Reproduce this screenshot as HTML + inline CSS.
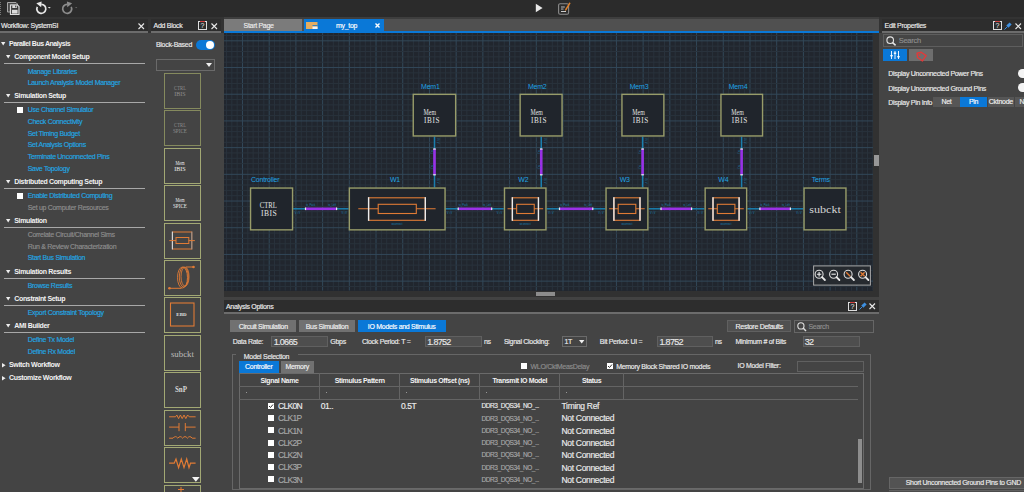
<!DOCTYPE html>
<html><head><meta charset="utf-8"><style>
*{margin:0;padding:0;box-sizing:border-box}
html,body{width:1024px;height:492px;overflow:hidden;background:#333;font-family:"Liberation Sans",sans-serif;font-size:7px;color:#e6e6e6}
.a{position:absolute}
.t{position:absolute;white-space:nowrap;line-height:10px;height:10px;letter-spacing:-0.3px;-webkit-text-stroke:0.15px currentColor}
.lk{color:#22a8e4}
.dis{color:#8e8e8e}
.b{font-weight:bold;color:#f2f2f2;letter-spacing:-0.35px;-webkit-text-stroke:0}
.w{color:#ececec}
svg{position:absolute;overflow:visible}
.serif{font-family:"Liberation Serif",serif}
</style></head><body>
<div class="a" style="left:0px;top:0px;width:1024px;height:17px;background:#2b2b2b;"></div>
<div class="a" style="left:0px;top:17px;width:1024px;height:2px;background:#333;"></div>
<div class="a" style="left:0px;top:19px;width:148px;height:12px;background:#2d2d2d;"></div>
<div class="a" style="left:0px;top:31px;width:148px;height:2px;background:#6c6c6c;"></div>
<div class="a" style="left:0px;top:33px;width:151px;height:459px;background:#444;"></div>
<div class="a" style="left:151px;top:19px;width:70px;height:12px;background:#2d2d2d;"></div>
<div class="a" style="left:151px;top:31px;width:70px;height:2px;background:#6c6c6c;"></div>
<div class="a" style="left:151px;top:33px;width:73px;height:459px;background:#444;"></div>
<div class="a" style="left:224px;top:17px;width:655px;height:14px;background:#505050;"></div>
<div class="a" style="left:224px;top:17px;width:655px;height:2px;background:#3e3e3e;"></div>
<div class="a" style="left:224px;top:31px;width:655px;height:2px;background:#0a78d7;"></div>
<div class="a" style="left:224px;top:19px;width:78px;height:12px;background:#7b7b7b;"></div>
<div class="a" style="left:304px;top:19px;width:80px;height:12px;background:#0a78d7;"></div>
<div class="a" style="left:224px;top:33px;width:655px;height:264px;background:#313131;"></div>
<div class="a" style="left:224px;top:297px;width:655px;height:3px;background:#424242;"></div>
<div class="a" style="left:224px;top:300px;width:655px;height:12px;background:#2d2d2d;"></div>
<div class="a" style="left:224px;top:312px;width:655px;height:2px;background:#6c6c6c;"></div>
<div class="a" style="left:224px;top:314px;width:655px;height:178px;background:#444;"></div>
<div class="a" style="left:882px;top:19px;width:142px;height:12px;background:#2d2d2d;"></div>
<div class="a" style="left:882px;top:31px;width:142px;height:2px;background:#6c6c6c;"></div>
<div class="a" style="left:879px;top:33px;width:145px;height:459px;background:#444;"></div>
<svg style="left:0;top:0" width="600" height="17">
<g fill="#777"><rect x="0" y="2" width="1" height="1"/><rect x="0" y="4" width="1" height="1"/><rect x="0" y="6" width="1" height="1"/><rect x="0" y="8" width="1" height="1"/><rect x="0" y="10" width="1" height="1"/><rect x="0" y="12" width="1" height="1"/><rect x="0" y="14" width="1" height="1"/></g>
<path d="M7.5 2.5 h8.5 l1.5 1.5 v1 h-7 v7 h-3z" fill="#4a4a4a" stroke="#a8a8a8" stroke-width="1"/>
<path d="M10.5 5 h7 l1.5 1.5 v8 h-8.5 z" fill="#3a3a3a" stroke="#dcdcdc" stroke-width="1.2"/>
<rect x="12.3" y="5.2" width="4.6" height="2.8" fill="#dcdcdc"/><rect x="15.2" y="5.6" width="1" height="1.8" fill="#3a3a3a"/>
<rect x="12" y="9.8" width="5.6" height="3.8" fill="#dcdcdc"/>
<path d="M37.3 6.8 A4.5 4.5 0 1 0 41.3 4.3" fill="none" stroke="#e8e8e8" stroke-width="1.7"/>
<path d="M36.3 3.2 L41.6 1.4 L41.2 7.2 z" fill="#e8e8e8"/>
<path d="M47.8 7 h3 l-1.5 1.6z" fill="#ddd"/>
<path d="M71.2 6.8 A4.5 4.5 0 1 1 67.2 4.3" fill="none" stroke="#8c8c8c" stroke-width="1.7"/>
<path d="M72.2 3.2 L66.9 1.4 L67.3 7.2 z" fill="#8c8c8c"/>
<path d="M75 7 h2.4 l-1.2 1.3z" fill="#666"/>
<path d="M535.8 3.8 L542.6 8 L535.8 12.2 z" fill="#e8e8e8"/>
<rect x="558.6" y="3.8" width="10" height="10.4" rx="1.5" fill="none" stroke="#8a8a8a" stroke-width="1.1"/>
<rect x="561" y="6.5" width="3.8" height="1" fill="#bbb"/><rect x="561" y="8.4" width="2.5" height="1.3" fill="#999"/><rect x="561" y="11" width="5" height="1" fill="#ccc"/>
<path d="M569.5 2.3 L570.6 3.3 L566.4 10.2 L565 10.8 L565.2 9.3 z" fill="#e4822a"/>
</svg>
<div class="t w" style="left:1px;top:20.50px;">Workflow: SystemSI</div>
<svg style="left:138.3px;top:22.6px" width="6.5" height="6.5"><path d="M0.5 0.5 L6.0 6.0 M6.0 0.5 L0.5 6.0" stroke="#e8e8e8" stroke-width="1.1"/></svg>
<svg style="left:0.6px;top:41.6px" width="5" height="4"><path d="M0 0 H4.4 L2.2 3.6z" fill="#eee"/></svg>
<div class="t b" style="left:9px;top:38.60px;letter-spacing:-0.45px">Parallel Bus Analysis</div>
<svg style="left:6px;top:55.1px" width="5" height="4"><path d="M0 0 H4.4 L2.2 3.6z" fill="#eee"/></svg>
<div class="t b" style="left:14.3px;top:52.10px;">Component Model Setup</div>
<div class="a" style="left:4px;top:63px;width:141.4px;height:1.2px;background:#a8a8a8;"></div>
<div class="t lk" style="left:27.7px;top:66.60px;">Manage Libraries</div>
<div class="t lk" style="left:27.7px;top:77.60px;">Launch Analysis Model Manager</div>
<svg style="left:6px;top:94.1px" width="5" height="4"><path d="M0 0 H4.4 L2.2 3.6z" fill="#eee"/></svg>
<div class="t b" style="left:14.3px;top:91.10px;">Simulation Setup</div>
<div class="a" style="left:4px;top:102px;width:141.4px;height:1.2px;background:#a8a8a8;"></div>
<div class="a" style="left:17px;top:106.6px;width:6px;height:6px;background:#fff"></div>
<div class="t lk" style="left:27.7px;top:104.60px;">Use Channel Simulator</div>
<div class="t lk" style="left:27.7px;top:116.80px;">Check Connectivity</div>
<div class="t lk" style="left:27.7px;top:128.60px;">Set Timing Budget</div>
<div class="t lk" style="left:27.7px;top:140.20px;">Set Analysis Options</div>
<div class="t lk" style="left:27.7px;top:152.00px;">Terminate Unconnected Pins</div>
<div class="t lk" style="left:27.7px;top:163.80px;">Save Topology</div>
<svg style="left:6px;top:180.29999999999998px" width="5" height="4"><path d="M0 0 H4.4 L2.2 3.6z" fill="#eee"/></svg>
<div class="t b" style="left:14.3px;top:177.30px;">Distributed Computing Setup</div>
<div class="a" style="left:4px;top:188.3px;width:141.4px;height:1.2px;background:#a8a8a8;"></div>
<div class="a" style="left:17px;top:193.0px;width:6px;height:6px;background:#fff"></div>
<div class="t lk" style="left:27.7px;top:191.00px;">Enable Distributed Computing</div>
<div class="t dis" style="left:27.7px;top:202.90px;">Set up Computer Resources</div>
<svg style="left:6px;top:219.0px" width="5" height="4"><path d="M0 0 H4.4 L2.2 3.6z" fill="#eee"/></svg>
<div class="t b" style="left:14.3px;top:216.00px;">Simulation</div>
<div class="a" style="left:4px;top:227px;width:141.4px;height:1.2px;background:#a8a8a8;"></div>
<div class="t dis" style="left:27.7px;top:229.80px;">Correlate Circuit/Channel Sims</div>
<div class="t dis" style="left:27.7px;top:241.80px;">Run &amp; Review Characterization</div>
<div class="t lk" style="left:27.7px;top:253.40px;">Start Bus Simulation</div>
<svg style="left:6px;top:269.6px" width="5" height="4"><path d="M0 0 H4.4 L2.2 3.6z" fill="#eee"/></svg>
<div class="t b" style="left:14.3px;top:266.60px;">Simulation Results</div>
<div class="a" style="left:4px;top:277.8px;width:141.4px;height:1.2px;background:#a8a8a8;"></div>
<div class="t lk" style="left:27.7px;top:280.80px;">Browse Results</div>
<svg style="left:6px;top:296.8px" width="5" height="4"><path d="M0 0 H4.4 L2.2 3.6z" fill="#eee"/></svg>
<div class="t b" style="left:14.3px;top:293.80px;">Constraint Setup</div>
<div class="a" style="left:4px;top:304.6px;width:141.4px;height:1.2px;background:#a8a8a8;"></div>
<div class="t lk" style="left:27.7px;top:308.20px;">Export Constraint Topology</div>
<svg style="left:6px;top:324.3px" width="5" height="4"><path d="M0 0 H4.4 L2.2 3.6z" fill="#eee"/></svg>
<div class="t b" style="left:14.3px;top:321.30px;">AMI Builder</div>
<div class="a" style="left:4px;top:332px;width:141.4px;height:1.2px;background:#a8a8a8;"></div>
<div class="t lk" style="left:27.7px;top:335.00px;">Define Tx Model</div>
<div class="t lk" style="left:27.7px;top:346.90px;">Define Rx Model</div>
<svg style="left:1.5px;top:363.0px" width="4" height="5"><path d="M0 0 V4.6 L3.6 2.3z" fill="#eee"/></svg>
<div class="t b" style="left:9px;top:360.30px;">Switch Workflow</div>
<svg style="left:1.5px;top:376.1px" width="4" height="5"><path d="M0 0 V4.6 L3.6 2.3z" fill="#eee"/></svg>
<div class="t b" style="left:9px;top:373.40px;">Customize Workflow</div>
<div class="t w" style="left:153.6px;top:20.50px;">Add Block</div>
<svg style="left:198px;top:21.3px" width="9" height="9"><rect x="0.5" y="0.5" width="8" height="8" fill="none" stroke="#ddd" stroke-width="1"/><rect x="2" y="0" width="5" height="1" fill="#d04040"/><text x="4.5" y="7.2" font-size="7" text-anchor="middle" fill="#eee" font-family="Liberation Sans">?</text></svg>
<svg style="left:211px;top:22.6px" width="6.5" height="6.5"><path d="M0.5 0.5 L6.0 6.0 M6.0 0.5 L0.5 6.0" stroke="#e8e8e8" stroke-width="1.1"/></svg>
<div class="t w" style="left:156px;top:40.00px;">Block-Based</div>
<div class="a" style="left:195.5px;top:40px;width:19.5px;height:10px;background:#0a78d7;border-radius:5px"></div>
<div class="a" style="left:205.9px;top:41.1px;width:7.9px;height:7.9px;background:#fff;border-radius:4px"></div>
<div class="a" style="left:156px;top:59px;width:59px;height:12px;background:transparent;border:1px solid #6a6a6a"></div>
<svg style="left:206px;top:63px" width="7" height="5"><path d="M0 0 H6 L3 4z" fill="#f0f0f0"/></svg>
<div class="a" style="left:164px;top:72.8px;width:37px;height:36px;border:1.5px solid #858a5e"></div>
<svg style="left:164px;top:72.8px" width="37" height="36"><text x="16" y="16.60" font-size="6" text-anchor="middle" fill="#8d8d8d" font-family="Liberation Serif" textLength="12" lengthAdjust="spacingAndGlyphs">CTRL</text><text x="16" y="22.60" font-size="6" text-anchor="middle" fill="#8d8d8d" font-family="Liberation Serif" textLength="11.5" lengthAdjust="spacingAndGlyphs">IBIS</text></svg>
<div class="a" style="left:164px;top:110.22999999999999px;width:37px;height:36px;border:1.5px solid #858a5e"></div>
<svg style="left:164px;top:110.22999999999999px" width="37" height="36"><text x="16" y="16.60" font-size="6" text-anchor="middle" fill="#8d8d8d" font-family="Liberation Serif" textLength="12" lengthAdjust="spacingAndGlyphs">CTRL</text><text x="16" y="22.60" font-size="6" text-anchor="middle" fill="#8d8d8d" font-family="Liberation Serif" textLength="14" lengthAdjust="spacingAndGlyphs">SPICE</text></svg>
<div class="a" style="left:164px;top:147.66px;width:37px;height:36px;border:1.5px solid #a2a874"></div>
<svg style="left:164px;top:147.66px" width="37" height="36"><text x="16" y="16.60" font-size="6" text-anchor="middle" fill="#ececec" font-family="Liberation Serif" textLength="9" lengthAdjust="spacingAndGlyphs">Mem</text><text x="16" y="22.60" font-size="6" text-anchor="middle" fill="#ececec" font-family="Liberation Serif" textLength="11.5" lengthAdjust="spacingAndGlyphs">IBIS</text></svg>
<div class="a" style="left:164px;top:185.08999999999997px;width:37px;height:36px;border:1.5px solid #a2a874"></div>
<svg style="left:164px;top:185.08999999999997px" width="37" height="36"><text x="16" y="16.60" font-size="6" text-anchor="middle" fill="#ececec" font-family="Liberation Serif" textLength="9" lengthAdjust="spacingAndGlyphs">Mem</text><text x="16" y="22.60" font-size="6" text-anchor="middle" fill="#ececec" font-family="Liberation Serif" textLength="14" lengthAdjust="spacingAndGlyphs">SPICE</text></svg>
<div class="a" style="left:164px;top:222.51999999999998px;width:37px;height:36px;border:1.5px solid #a2a874"></div>
<svg style="left:164px;top:222.51999999999998px" width="37" height="36"><rect x="8.5" y="9" width="19.3" height="17" fill="none" stroke="#e07b35" stroke-width="1"/><rect x="7.8" y="8.6" width="1.2" height="17.8" fill="#d4d4d4"/><rect x="27.3" y="8.6" width="1" height="17.8" fill="#999"/><rect x="12" y="14.5" width="12.8" height="6" fill="none" stroke="#e07b35" stroke-width="1"/><path d="M5.3 17.6 H12 M24.8 17.6 H30.9" stroke="#e07b35" stroke-width="1"/></svg>
<div class="a" style="left:164px;top:259.95px;width:37px;height:36px;border:1.5px solid #a2a874"></div>
<svg style="left:164px;top:259.95px" width="37" height="36"><g fill="none" stroke="#e07b35" stroke-width="0.9"><ellipse cx="18.5" cy="17.5" rx="5" ry="10.5"/><ellipse cx="19.8" cy="17" rx="4.5" ry="10"/><ellipse cx="21" cy="16.6" rx="4" ry="9.5"/></g><path d="M4.5 28.3 H17.5 M22 7 H30" stroke="#e07b35" stroke-width="1"/><circle cx="5.5" cy="28.3" r="1.3" fill="#e07b35"/><circle cx="29.5" cy="7" r="1.3" fill="#e07b35"/></svg>
<div class="a" style="left:164px;top:297.38px;width:37px;height:36px;border:1.5px solid #a2a874"></div>
<svg style="left:164px;top:297.38px" width="37" height="36"><rect x="6.5" y="6" width="23.5" height="23" fill="none" stroke="#e07b35" stroke-width="1.1"/><text x="17.5" y="19.3" font-size="5" text-anchor="middle" fill="#e0e0e0" font-family="Liberation Serif" font-weight="bold">EBD</text></svg>
<div class="a" style="left:164px;top:334.81px;width:37px;height:36px;border:1.5px solid #a2a874"></div>
<svg style="left:164px;top:334.81px" width="37" height="36"><text x="18.4" y="22.3" font-size="8" fill="#bdbdbd" font-family="Liberation Serif" text-anchor="middle" textLength="23" lengthAdjust="spacingAndGlyphs">subckt</text></svg>
<div class="a" style="left:164px;top:372.24px;width:37px;height:36px;border:1.5px solid #a2a874"></div>
<svg style="left:164px;top:372.24px" width="37" height="36"><text x="17" y="20" font-size="8.2" text-anchor="middle" fill="#d8d8d8" font-family="Liberation Serif" font-weight="bold" textLength="12" lengthAdjust="spacingAndGlyphs">SnP</text></svg>
<div class="a" style="left:164px;top:409.67px;width:37px;height:36px;border:1.5px solid #a2a874"></div>
<svg style="left:164px;top:409.67px" width="37" height="36"><g stroke="#e07b35" stroke-width="1" fill="none"><path d="M5.1 6.8 H11.5 L12.8 5 L14.6 8.6 L16.4 5 L18.2 8.6 L20 5 L21.8 8.6 L23.6 5 L25.2 6.8 H31.6"/><path d="M5.1 17.1 H15 M15 13 V21.2 M21.3 13 V21.2 M21.3 17.1 H31.6"/><path d="M5.1 28.2 H9 q2.4 -3.2 4.8 0 q2.4 -3.2 4.8 0 q2.4 -3.2 4.8 0 q2.4 -3.2 4.8 0 H31.6"/></g></svg>
<div class="a" style="left:164px;top:447.1px;width:37px;height:36px;border:1.5px solid #a2a874"></div>
<svg style="left:164px;top:447.1px" width="37" height="36"><path d="M5.1 16.2 H10.2 L12 12 L14.6 20.6 L17.3 12 L20 20.6 L22.7 12 L25 20.6 L26.5 16.2 H31.6" fill="none" stroke="#e07b35" stroke-width="1.2"/></svg>
<div class="a" style="left:164px;top:484.53000000000003px;width:37px;height:36px;border:1.5px solid #a2a874"></div>
<svg style="left:164px;top:484.53000000000003px" width="37" height="36"><path d="M17 2 V8 M14 4.5 H20" stroke="#e07b35" stroke-width="1"/></svg>
<svg style="left:192.2px;top:477px" width="8" height="6"><path d="M0 0 H7.7 L3.85 4.8z" fill="#f4f4f4"/></svg>
<div class="t w" style="left:158.60px;top:20.50px;width:200px;text-align:center;">Start Page</div>
<svg style="left:305.5px;top:21.5px" width="12" height="8"><rect x="0" y="0" width="11.5" height="7" fill="#e3ad62"/><rect x="6.5" y="3.2" width="5" height="0.9" fill="#0a78d7"/><rect x="6.5" y="4.6" width="5" height="2.4" fill="#f4f4f4"/></svg>
<div class="t w" style="left:246.50px;top:20.50px;width:200px;text-align:center;color:#fff">my_top</div>
<svg style="left:374.5px;top:22.8px" width="5" height="5"><path d="M0.5 0.5 L4.5 4.5 M4.5 0.5 L0.5 4.5" stroke="#fff" stroke-width="1.4"/></svg>
<div class="a" style="left:224px;top:33px;width:649px;height:257.5px;background:#21262e;overflow:hidden"><svg style="left:0;top:0" width="649" height="257.5"><rect x="1.95" y="0" width="1" height="257.5" fill="#29323c"/><rect x="7.30" y="0" width="1" height="257.5" fill="#29323c"/><rect x="12.64" y="0" width="1" height="257.5" fill="#29323c"/><rect x="17.98" y="0" width="1" height="257.5" fill="#324859"/><rect x="23.32" y="0" width="1" height="257.5" fill="#29323c"/><rect x="28.66" y="0" width="1" height="257.5" fill="#29323c"/><rect x="34.01" y="0" width="1" height="257.5" fill="#29323c"/><rect x="39.35" y="0" width="1" height="257.5" fill="#29323c"/><rect x="44.69" y="0" width="1" height="257.5" fill="#324859"/><rect x="50.03" y="0" width="1" height="257.5" fill="#29323c"/><rect x="55.37" y="0" width="1" height="257.5" fill="#29323c"/><rect x="60.72" y="0" width="1" height="257.5" fill="#29323c"/><rect x="66.06" y="0" width="1" height="257.5" fill="#29323c"/><rect x="71.40" y="0" width="1" height="257.5" fill="#324859"/><rect x="76.74" y="0" width="1" height="257.5" fill="#29323c"/><rect x="82.08" y="0" width="1" height="257.5" fill="#29323c"/><rect x="87.43" y="0" width="1" height="257.5" fill="#29323c"/><rect x="92.77" y="0" width="1" height="257.5" fill="#29323c"/><rect x="98.11" y="0" width="1" height="257.5" fill="#324859"/><rect x="103.45" y="0" width="1" height="257.5" fill="#29323c"/><rect x="108.79" y="0" width="1" height="257.5" fill="#29323c"/><rect x="114.14" y="0" width="1" height="257.5" fill="#29323c"/><rect x="119.48" y="0" width="1" height="257.5" fill="#29323c"/><rect x="124.82" y="0" width="1" height="257.5" fill="#324859"/><rect x="130.16" y="0" width="1" height="257.5" fill="#29323c"/><rect x="135.50" y="0" width="1" height="257.5" fill="#29323c"/><rect x="140.85" y="0" width="1" height="257.5" fill="#29323c"/><rect x="146.19" y="0" width="1" height="257.5" fill="#29323c"/><rect x="151.53" y="0" width="1" height="257.5" fill="#324859"/><rect x="156.87" y="0" width="1" height="257.5" fill="#29323c"/><rect x="162.21" y="0" width="1" height="257.5" fill="#29323c"/><rect x="167.56" y="0" width="1" height="257.5" fill="#29323c"/><rect x="172.90" y="0" width="1" height="257.5" fill="#29323c"/><rect x="178.24" y="0" width="1" height="257.5" fill="#324859"/><rect x="183.58" y="0" width="1" height="257.5" fill="#29323c"/><rect x="188.92" y="0" width="1" height="257.5" fill="#29323c"/><rect x="194.27" y="0" width="1" height="257.5" fill="#29323c"/><rect x="199.61" y="0" width="1" height="257.5" fill="#29323c"/><rect x="204.95" y="0" width="1" height="257.5" fill="#324859"/><rect x="210.29" y="0" width="1" height="257.5" fill="#29323c"/><rect x="215.63" y="0" width="1" height="257.5" fill="#29323c"/><rect x="220.98" y="0" width="1" height="257.5" fill="#29323c"/><rect x="226.32" y="0" width="1" height="257.5" fill="#29323c"/><rect x="231.66" y="0" width="1" height="257.5" fill="#324859"/><rect x="237.00" y="0" width="1" height="257.5" fill="#29323c"/><rect x="242.34" y="0" width="1" height="257.5" fill="#29323c"/><rect x="247.69" y="0" width="1" height="257.5" fill="#29323c"/><rect x="253.03" y="0" width="1" height="257.5" fill="#29323c"/><rect x="258.37" y="0" width="1" height="257.5" fill="#324859"/><rect x="263.71" y="0" width="1" height="257.5" fill="#29323c"/><rect x="269.05" y="0" width="1" height="257.5" fill="#29323c"/><rect x="274.40" y="0" width="1" height="257.5" fill="#29323c"/><rect x="279.74" y="0" width="1" height="257.5" fill="#29323c"/><rect x="285.08" y="0" width="1" height="257.5" fill="#324859"/><rect x="290.42" y="0" width="1" height="257.5" fill="#29323c"/><rect x="295.76" y="0" width="1" height="257.5" fill="#29323c"/><rect x="301.11" y="0" width="1" height="257.5" fill="#29323c"/><rect x="306.45" y="0" width="1" height="257.5" fill="#29323c"/><rect x="311.79" y="0" width="1" height="257.5" fill="#324859"/><rect x="317.13" y="0" width="1" height="257.5" fill="#29323c"/><rect x="322.47" y="0" width="1" height="257.5" fill="#29323c"/><rect x="327.82" y="0" width="1" height="257.5" fill="#29323c"/><rect x="333.16" y="0" width="1" height="257.5" fill="#29323c"/><rect x="338.50" y="0" width="1" height="257.5" fill="#324859"/><rect x="343.84" y="0" width="1" height="257.5" fill="#29323c"/><rect x="349.18" y="0" width="1" height="257.5" fill="#29323c"/><rect x="354.53" y="0" width="1" height="257.5" fill="#29323c"/><rect x="359.87" y="0" width="1" height="257.5" fill="#29323c"/><rect x="365.21" y="0" width="1" height="257.5" fill="#324859"/><rect x="370.55" y="0" width="1" height="257.5" fill="#29323c"/><rect x="375.89" y="0" width="1" height="257.5" fill="#29323c"/><rect x="381.24" y="0" width="1" height="257.5" fill="#29323c"/><rect x="386.58" y="0" width="1" height="257.5" fill="#29323c"/><rect x="391.92" y="0" width="1" height="257.5" fill="#324859"/><rect x="397.26" y="0" width="1" height="257.5" fill="#29323c"/><rect x="402.60" y="0" width="1" height="257.5" fill="#29323c"/><rect x="407.95" y="0" width="1" height="257.5" fill="#29323c"/><rect x="413.29" y="0" width="1" height="257.5" fill="#29323c"/><rect x="418.63" y="0" width="1" height="257.5" fill="#324859"/><rect x="423.97" y="0" width="1" height="257.5" fill="#29323c"/><rect x="429.31" y="0" width="1" height="257.5" fill="#29323c"/><rect x="434.66" y="0" width="1" height="257.5" fill="#29323c"/><rect x="440.00" y="0" width="1" height="257.5" fill="#29323c"/><rect x="445.34" y="0" width="1" height="257.5" fill="#324859"/><rect x="450.68" y="0" width="1" height="257.5" fill="#29323c"/><rect x="456.02" y="0" width="1" height="257.5" fill="#29323c"/><rect x="461.37" y="0" width="1" height="257.5" fill="#29323c"/><rect x="466.71" y="0" width="1" height="257.5" fill="#29323c"/><rect x="472.05" y="0" width="1" height="257.5" fill="#324859"/><rect x="477.39" y="0" width="1" height="257.5" fill="#29323c"/><rect x="482.73" y="0" width="1" height="257.5" fill="#29323c"/><rect x="488.08" y="0" width="1" height="257.5" fill="#29323c"/><rect x="493.42" y="0" width="1" height="257.5" fill="#29323c"/><rect x="498.76" y="0" width="1" height="257.5" fill="#324859"/><rect x="504.10" y="0" width="1" height="257.5" fill="#29323c"/><rect x="509.44" y="0" width="1" height="257.5" fill="#29323c"/><rect x="514.79" y="0" width="1" height="257.5" fill="#29323c"/><rect x="520.13" y="0" width="1" height="257.5" fill="#29323c"/><rect x="525.47" y="0" width="1" height="257.5" fill="#324859"/><rect x="530.81" y="0" width="1" height="257.5" fill="#29323c"/><rect x="536.15" y="0" width="1" height="257.5" fill="#29323c"/><rect x="541.50" y="0" width="1" height="257.5" fill="#29323c"/><rect x="546.84" y="0" width="1" height="257.5" fill="#29323c"/><rect x="552.18" y="0" width="1" height="257.5" fill="#324859"/><rect x="557.52" y="0" width="1" height="257.5" fill="#29323c"/><rect x="562.86" y="0" width="1" height="257.5" fill="#29323c"/><rect x="568.21" y="0" width="1" height="257.5" fill="#29323c"/><rect x="573.55" y="0" width="1" height="257.5" fill="#29323c"/><rect x="578.89" y="0" width="1" height="257.5" fill="#324859"/><rect x="584.23" y="0" width="1" height="257.5" fill="#29323c"/><rect x="589.57" y="0" width="1" height="257.5" fill="#29323c"/><rect x="594.92" y="0" width="1" height="257.5" fill="#29323c"/><rect x="600.26" y="0" width="1" height="257.5" fill="#29323c"/><rect x="605.60" y="0" width="1" height="257.5" fill="#324859"/><rect x="610.94" y="0" width="1" height="257.5" fill="#29323c"/><rect x="616.28" y="0" width="1" height="257.5" fill="#29323c"/><rect x="621.63" y="0" width="1" height="257.5" fill="#29323c"/><rect x="626.97" y="0" width="1" height="257.5" fill="#29323c"/><rect x="632.31" y="0" width="1" height="257.5" fill="#324859"/><rect x="637.65" y="0" width="1" height="257.5" fill="#29323c"/><rect x="642.99" y="0" width="1" height="257.5" fill="#29323c"/><rect x="648.34" y="0" width="1" height="257.5" fill="#29323c"/><rect x="0" y="1.98" width="649" height="1" fill="#29323c"/><rect x="0" y="7.32" width="649" height="1" fill="#324859"/><rect x="0" y="12.66" width="649" height="1" fill="#29323c"/><rect x="0" y="18.00" width="649" height="1" fill="#29323c"/><rect x="0" y="23.34" width="649" height="1" fill="#29323c"/><rect x="0" y="28.68" width="649" height="1" fill="#29323c"/><rect x="0" y="34.02" width="649" height="1" fill="#324859"/><rect x="0" y="39.36" width="649" height="1" fill="#29323c"/><rect x="0" y="44.70" width="649" height="1" fill="#29323c"/><rect x="0" y="50.04" width="649" height="1" fill="#29323c"/><rect x="0" y="55.38" width="649" height="1" fill="#29323c"/><rect x="0" y="60.72" width="649" height="1" fill="#324859"/><rect x="0" y="66.06" width="649" height="1" fill="#29323c"/><rect x="0" y="71.40" width="649" height="1" fill="#29323c"/><rect x="0" y="76.74" width="649" height="1" fill="#29323c"/><rect x="0" y="82.08" width="649" height="1" fill="#29323c"/><rect x="0" y="87.42" width="649" height="1" fill="#324859"/><rect x="0" y="92.76" width="649" height="1" fill="#29323c"/><rect x="0" y="98.10" width="649" height="1" fill="#29323c"/><rect x="0" y="103.44" width="649" height="1" fill="#29323c"/><rect x="0" y="108.78" width="649" height="1" fill="#29323c"/><rect x="0" y="114.12" width="649" height="1" fill="#324859"/><rect x="0" y="119.46" width="649" height="1" fill="#29323c"/><rect x="0" y="124.80" width="649" height="1" fill="#29323c"/><rect x="0" y="130.14" width="649" height="1" fill="#29323c"/><rect x="0" y="135.48" width="649" height="1" fill="#29323c"/><rect x="0" y="140.82" width="649" height="1" fill="#324859"/><rect x="0" y="146.16" width="649" height="1" fill="#29323c"/><rect x="0" y="151.50" width="649" height="1" fill="#29323c"/><rect x="0" y="156.84" width="649" height="1" fill="#29323c"/><rect x="0" y="162.18" width="649" height="1" fill="#29323c"/><rect x="0" y="167.52" width="649" height="1" fill="#324859"/><rect x="0" y="172.86" width="649" height="1" fill="#29323c"/><rect x="0" y="178.20" width="649" height="1" fill="#29323c"/><rect x="0" y="183.54" width="649" height="1" fill="#29323c"/><rect x="0" y="188.88" width="649" height="1" fill="#29323c"/><rect x="0" y="194.22" width="649" height="1" fill="#324859"/><rect x="0" y="199.56" width="649" height="1" fill="#29323c"/><rect x="0" y="204.90" width="649" height="1" fill="#29323c"/><rect x="0" y="210.24" width="649" height="1" fill="#29323c"/><rect x="0" y="215.58" width="649" height="1" fill="#29323c"/><rect x="0" y="220.92" width="649" height="1" fill="#324859"/><rect x="0" y="226.26" width="649" height="1" fill="#29323c"/><rect x="0" y="231.60" width="649" height="1" fill="#29323c"/><rect x="0" y="236.94" width="649" height="1" fill="#29323c"/><rect x="0" y="242.28" width="649" height="1" fill="#29323c"/><rect x="0" y="247.62" width="649" height="1" fill="#324859"/><rect x="0" y="252.96" width="649" height="1" fill="#29323c"/><g transform="translate(-224,-33)"><rect x="293.2" y="208.05" width="55.40" height="1.5" fill="#1a7eae"/><rect x="305.5" y="207.5" width="31.10" height="2.6" fill="#9a30e6"/><rect x="304.9" y="207.5" width="1.2" height="2.6" fill="#eee"/><rect x="336.0" y="207.5" width="1.2" height="2.6" fill="#eee"/><text x="306.0" y="205.8" font-size="2.6" fill="#1b7fb0" font-family="Liberation Sans" text-anchor="start">tx_Pack</text><text x="336.1" y="205.8" font-size="2.6" fill="#1b7fb0" font-family="Liberation Sans" text-anchor="end">rx_Left</text><text x="294.7" y="213.8" font-size="2.6" fill="#1b7fb0" font-family="Liberation Sans" text-anchor="start">V i V</text><text x="347.1" y="213.8" font-size="2.6" fill="#1b7fb0" font-family="Liberation Sans" text-anchor="end">V i V</text><rect x="445.3" y="208.05" width="58.45" height="1.5" fill="#1a7eae"/><rect x="458.2" y="207.5" width="33.50" height="2.6" fill="#9a30e6"/><rect x="457.59999999999997" y="207.5" width="1.2" height="2.6" fill="#eee"/><rect x="491.09999999999997" y="207.5" width="1.2" height="2.6" fill="#eee"/><text x="458.7" y="205.8" font-size="2.6" fill="#1b7fb0" font-family="Liberation Sans" text-anchor="start">tx_Pack</text><text x="491.2" y="205.8" font-size="2.6" fill="#1b7fb0" font-family="Liberation Sans" text-anchor="end">rx_Left</text><text x="446.8" y="213.8" font-size="2.6" fill="#1b7fb0" font-family="Liberation Sans" text-anchor="start">V i V</text><text x="502.25" y="213.8" font-size="2.6" fill="#1b7fb0" font-family="Liberation Sans" text-anchor="end">V i V</text><rect x="546.7" y="208.05" width="58.60" height="1.5" fill="#1a7eae"/><rect x="559.5" y="207.5" width="33.30" height="2.6" fill="#9a30e6"/><rect x="558.9" y="207.5" width="1.2" height="2.6" fill="#eee"/><rect x="592.1999999999999" y="207.5" width="1.2" height="2.6" fill="#eee"/><text x="560.0" y="205.8" font-size="2.6" fill="#1b7fb0" font-family="Liberation Sans" text-anchor="start">tx_Pack</text><text x="592.3" y="205.8" font-size="2.6" fill="#1b7fb0" font-family="Liberation Sans" text-anchor="end">rx_Left</text><text x="548.2" y="213.8" font-size="2.6" fill="#1b7fb0" font-family="Liberation Sans" text-anchor="start">V i V</text><text x="603.8" y="213.8" font-size="2.6" fill="#1b7fb0" font-family="Liberation Sans" text-anchor="end">V i V</text><rect x="648.6" y="208.05" width="55.80" height="1.5" fill="#1a7eae"/><rect x="661" y="207.5" width="30.60" height="2.6" fill="#9a30e6"/><rect x="660.4" y="207.5" width="1.2" height="2.6" fill="#eee"/><rect x="691.0" y="207.5" width="1.2" height="2.6" fill="#eee"/><text x="661.5" y="205.8" font-size="2.6" fill="#1b7fb0" font-family="Liberation Sans" text-anchor="start">tx_Pack</text><text x="691.1" y="205.8" font-size="2.6" fill="#1b7fb0" font-family="Liberation Sans" text-anchor="end">rx_Left</text><text x="650.1" y="213.8" font-size="2.6" fill="#1b7fb0" font-family="Liberation Sans" text-anchor="start">V i V</text><text x="702.9" y="213.8" font-size="2.6" fill="#1b7fb0" font-family="Liberation Sans" text-anchor="end">V i V</text><rect x="747.4" y="208.05" width="55.90" height="1.5" fill="#1a7eae"/><rect x="759.9" y="207.5" width="30.50" height="2.6" fill="#9a30e6"/><rect x="759.3" y="207.5" width="1.2" height="2.6" fill="#eee"/><rect x="789.8" y="207.5" width="1.2" height="2.6" fill="#eee"/><text x="760.4" y="205.8" font-size="2.6" fill="#1b7fb0" font-family="Liberation Sans" text-anchor="start">tx_Pack</text><text x="789.9" y="205.8" font-size="2.6" fill="#1b7fb0" font-family="Liberation Sans" text-anchor="end">rx_Left</text><text x="748.9" y="213.8" font-size="2.6" fill="#1b7fb0" font-family="Liberation Sans" text-anchor="start">V i V</text><text x="801.8" y="213.8" font-size="2.6" fill="#1b7fb0" font-family="Liberation Sans" text-anchor="end">V i V</text><rect x="433.75" y="136.7" width="1.5" height="50.7" fill="#1a7eae"/><rect x="433.2" y="149" width="2.6" height="25.8" fill="#9a30e6"/><rect x="433.2" y="148.4" width="2.6" height="1.2" fill="#eee"/><rect x="433.2" y="174.2" width="2.6" height="1.2" fill="#eee"/><g fill="#1b7fb0" font-size="2.6" font-family="Liberation Sans"><text transform="translate(431.3,150) rotate(90)">rx_i</text><text transform="translate(436.9,138) rotate(90)">V i V</text><text transform="translate(431.3,165) rotate(90)">tx_i</text><text transform="translate(436.9,178) rotate(90)">V i V</text></g><rect x="540.5" y="136.7" width="1.5" height="50.7" fill="#1a7eae"/><rect x="539.95" y="149" width="2.6" height="25.8" fill="#9a30e6"/><rect x="539.95" y="148.4" width="2.6" height="1.2" fill="#eee"/><rect x="539.95" y="174.2" width="2.6" height="1.2" fill="#eee"/><g fill="#1b7fb0" font-size="2.6" font-family="Liberation Sans"><text transform="translate(538.05,150) rotate(90)">rx_i</text><text transform="translate(543.65,138) rotate(90)">V i V</text><text transform="translate(538.05,165) rotate(90)">tx_i</text><text transform="translate(543.65,178) rotate(90)">V i V</text></g><rect x="641.85" y="136.7" width="1.5" height="50.7" fill="#1a7eae"/><rect x="641.3000000000001" y="149" width="2.6" height="25.8" fill="#9a30e6"/><rect x="641.3000000000001" y="148.4" width="2.6" height="1.2" fill="#eee"/><rect x="641.3000000000001" y="174.2" width="2.6" height="1.2" fill="#eee"/><g fill="#1b7fb0" font-size="2.6" font-family="Liberation Sans"><text transform="translate(639.4,150) rotate(90)">rx_i</text><text transform="translate(645.0,138) rotate(90)">V i V</text><text transform="translate(639.4,165) rotate(90)">tx_i</text><text transform="translate(645.0,178) rotate(90)">V i V</text></g><rect x="740.85" y="136.7" width="1.5" height="50.7" fill="#1a7eae"/><rect x="740.3000000000001" y="149" width="2.6" height="25.8" fill="#9a30e6"/><rect x="740.3000000000001" y="148.4" width="2.6" height="1.2" fill="#eee"/><rect x="740.3000000000001" y="174.2" width="2.6" height="1.2" fill="#eee"/><g fill="#1b7fb0" font-size="2.6" font-family="Liberation Sans"><text transform="translate(738.4,150) rotate(90)">rx_i</text><text transform="translate(744.0,138) rotate(90)">V i V</text><text transform="translate(738.4,165) rotate(90)">tx_i</text><text transform="translate(744.0,178) rotate(90)">V i V</text></g><rect x="250.55" y="188.05" width="42.00" height="41.80" fill="#20252c" stroke="#989c69" stroke-width="1.4"/><rect x="349.35" y="188.05" width="95.70" height="41.80" fill="#20252c" stroke="#989c69" stroke-width="1.4"/><rect x="504.50" y="188.05" width="41.45" height="41.80" fill="#20252c" stroke="#989c69" stroke-width="1.4"/><rect x="606.05" y="188.05" width="41.80" height="41.80" fill="#20252c" stroke="#989c69" stroke-width="1.4"/><rect x="705.15" y="188.05" width="41.50" height="41.80" fill="#20252c" stroke="#989c69" stroke-width="1.4"/><rect x="804.05" y="188.05" width="41.90" height="41.80" fill="#20252c" stroke="#989c69" stroke-width="1.4"/><rect x="413.25" y="94.35" width="42.40" height="41.60" fill="#20252c" stroke="#989c69" stroke-width="1.4"/><text x="423.6" y="114.6" font-size="8" fill="#e4e4e4" font-family="Liberation Serif" textLength="12.4" lengthAdjust="spacingAndGlyphs">Mem</text><text x="424.0" y="122.7" font-size="7.2" fill="#e4e4e4" font-family="Liberation Serif" textLength="15.5" lengthAdjust="spacing">IBIS</text><rect x="520.15" y="94.35" width="41.90" height="41.60" fill="#20252c" stroke="#989c69" stroke-width="1.4"/><text x="530.5" y="114.6" font-size="8" fill="#e4e4e4" font-family="Liberation Serif" textLength="12.4" lengthAdjust="spacingAndGlyphs">Mem</text><text x="530.9" y="122.7" font-size="7.2" fill="#e4e4e4" font-family="Liberation Serif" textLength="15.5" lengthAdjust="spacing">IBIS</text><rect x="621.95" y="94.35" width="41.90" height="41.60" fill="#20252c" stroke="#989c69" stroke-width="1.4"/><text x="632.3000000000001" y="114.6" font-size="8" fill="#e4e4e4" font-family="Liberation Serif" textLength="12.4" lengthAdjust="spacingAndGlyphs">Mem</text><text x="632.7" y="122.7" font-size="7.2" fill="#e4e4e4" font-family="Liberation Serif" textLength="15.5" lengthAdjust="spacing">IBIS</text><rect x="720.95" y="94.35" width="41.60" height="41.60" fill="#20252c" stroke="#989c69" stroke-width="1.4"/><text x="731.3000000000001" y="114.6" font-size="8" fill="#e4e4e4" font-family="Liberation Serif" textLength="12.4" lengthAdjust="spacingAndGlyphs">Mem</text><text x="731.7" y="122.7" font-size="7.2" fill="#e4e4e4" font-family="Liberation Serif" textLength="15.5" lengthAdjust="spacing">IBIS</text><text x="259.8" y="208.2" font-size="8" fill="#e4e4e4" font-family="Liberation Serif" textLength="17" lengthAdjust="spacingAndGlyphs">CTRL</text><text x="261" y="216.1" font-size="7.6" fill="#e4e4e4" font-family="Liberation Serif" textLength="15.8" lengthAdjust="spacing">IBIS</text><text x="809.3" y="212.6" font-size="10" fill="#d4d4d4" font-family="Liberation Serif" textLength="31.6" lengthAdjust="spacingAndGlyphs">subckt</text><path d="M358.3 208.8 H378.2 M416.3 208.8 H435.6" stroke="#e07b35" stroke-width="1.1"/><rect x="368.6" y="197.8" width="56.69999999999999" height="22.5" fill="none" stroke="#e07b35" stroke-width="1.1"/><rect x="378.2" y="204.3" width="38.10000000000002" height="9.2" fill="none" stroke="#e07b35" stroke-width="1.1"/><rect x="367.90000000000003" y="197.2" width="1.4" height="23.6" fill="#ececec"/><rect x="424.6" y="197.2" width="1.4" height="23.6" fill="#ececec"/><text x="396.95000000000005" y="224.5" font-size="2.6" fill="#1b7fb0" font-family="Liberation Sans" text-anchor="middle">wconnect</text><path d="M507.55 208.8 H516.65 M534.25 208.8 H543.15" stroke="#e07b35" stroke-width="1.1"/><rect x="512.35" y="197.8" width="26.100000000000023" height="22.5" fill="none" stroke="#e07b35" stroke-width="1.1"/><rect x="516.65" y="204.3" width="17.600000000000023" height="9.2" fill="none" stroke="#e07b35" stroke-width="1.1"/><rect x="511.65000000000003" y="197.2" width="1.4" height="23.6" fill="#ececec"/><rect x="537.75" y="197.2" width="1.4" height="23.6" fill="#ececec"/><text x="525.225" y="224.5" font-size="2.6" fill="#1b7fb0" font-family="Liberation Sans" text-anchor="middle">wconnect</text><path d="M609.0999999999999 208.8 H618.1999999999999 M635.8 208.8 H644.6999999999999" stroke="#e07b35" stroke-width="1.1"/><rect x="613.9" y="197.8" width="26.100000000000023" height="22.5" fill="none" stroke="#e07b35" stroke-width="1.1"/><rect x="618.1999999999999" y="204.3" width="17.600000000000023" height="9.2" fill="none" stroke="#e07b35" stroke-width="1.1"/><rect x="613.1999999999999" y="197.2" width="1.4" height="23.6" fill="#ececec"/><rect x="639.3" y="197.2" width="1.4" height="23.6" fill="#ececec"/><text x="626.95" y="224.5" font-size="2.6" fill="#1b7fb0" font-family="Liberation Sans" text-anchor="middle">wconnect</text><path d="M708.1999999999999 208.8 H717.3 M734.9 208.8 H743.8" stroke="#e07b35" stroke-width="1.1"/><rect x="713.0" y="197.8" width="26.100000000000023" height="22.5" fill="none" stroke="#e07b35" stroke-width="1.1"/><rect x="717.3" y="204.3" width="17.600000000000023" height="9.2" fill="none" stroke="#e07b35" stroke-width="1.1"/><rect x="712.3" y="197.2" width="1.4" height="23.6" fill="#ececec"/><rect x="738.4" y="197.2" width="1.4" height="23.6" fill="#ececec"/><text x="725.9" y="224.5" font-size="2.6" fill="#1b7fb0" font-family="Liberation Sans" text-anchor="middle">wconnect</text><text x="251" y="182.10" font-size="7" fill="#1fa3e4" font-family="Liberation Sans" text-anchor="start" letter-spacing="-0.2">Controller</text><text x="395" y="182.10" font-size="7" fill="#1fa3e4" font-family="Liberation Sans" text-anchor="middle" letter-spacing="-0.2">W1</text><text x="523.3" y="182.10" font-size="7" fill="#1fa3e4" font-family="Liberation Sans" text-anchor="middle" letter-spacing="-0.2">W2</text><text x="624.7" y="182.10" font-size="7" fill="#1fa3e4" font-family="Liberation Sans" text-anchor="middle" letter-spacing="-0.2">W3</text><text x="723.4" y="182.10" font-size="7" fill="#1fa3e4" font-family="Liberation Sans" text-anchor="middle" letter-spacing="-0.2">W4</text><text x="811.8" y="182.10" font-size="7" fill="#1fa3e4" font-family="Liberation Sans" text-anchor="start" letter-spacing="-0.2">Terms</text><text x="421.0" y="88.80" font-size="7" fill="#1fa3e4" font-family="Liberation Sans" text-anchor="start" letter-spacing="-0.2">Mem1</text><text x="527.9" y="88.80" font-size="7" fill="#1fa3e4" font-family="Liberation Sans" text-anchor="start" letter-spacing="-0.2">Mem2</text><text x="629.7" y="88.80" font-size="7" fill="#1fa3e4" font-family="Liberation Sans" text-anchor="start" letter-spacing="-0.2">Mem3</text><text x="728.7" y="88.80" font-size="7" fill="#1fa3e4" font-family="Liberation Sans" text-anchor="start" letter-spacing="-0.2">Mem4</text><rect x="813.6" y="265.9" width="56.8" height="19.2" fill="#262a2f" stroke="#a8a8a8" stroke-width="1"/><circle cx="819.1" cy="274.2" r="4" fill="none" stroke="#dcdcdc" stroke-width="1.1"/><path d="M822.0 277.09999999999997 L824.9 280.0" stroke="#e8e8e8" stroke-width="1.8" stroke-linecap="round"/><path d="M816.9 274.2 H821.3000000000001 M819.1 272.0 V276.4" stroke="#eee" stroke-width="1.1"/><circle cx="833.6" cy="274.2" r="4" fill="none" stroke="#dcdcdc" stroke-width="1.1"/><path d="M836.5 277.09999999999997 L839.4 280.0" stroke="#e8e8e8" stroke-width="1.8" stroke-linecap="round"/><path d="M831.4 274.2 H835.8000000000001" stroke="#eee" stroke-width="1.1"/><circle cx="848.1" cy="274.2" r="4" fill="none" stroke="#dcdcdc" stroke-width="1.1"/><path d="M851.0 277.09999999999997 L853.9 280.0" stroke="#e8e8e8" stroke-width="1.8" stroke-linecap="round"/><path d="M846.1 272.2 L850.1 276.2" stroke="#e07b35" stroke-width="1.4"/><circle cx="862.6" cy="274.2" r="4" fill="none" stroke="#dcdcdc" stroke-width="1.1"/><path d="M865.5 277.09999999999997 L868.4 280.0" stroke="#e8e8e8" stroke-width="1.8" stroke-linecap="round"/><path d="M860.6 272.2 L864.6 276.2 M864.6 272.2 L860.6 276.2" stroke="#e07b35" stroke-width="1.3"/></g></svg></div>
<div class="a" style="left:874px;top:155px;width:4.6px;height:11.2px;background:#979797;"></div>
<div class="a" style="left:536px;top:291.5px;width:19px;height:4px;background:#8c8c8c;"></div>
<div class="t w" style="left:226px;top:301.50px;">Analysis Options</div>
<svg style="left:848px;top:302px" width="9" height="9"><rect x="0.5" y="0.5" width="8" height="8" fill="none" stroke="#ddd" stroke-width="1"/><rect x="2" y="0" width="5" height="1" fill="#d04040"/><text x="4.5" y="7.2" font-size="7" text-anchor="middle" fill="#eee" font-family="Liberation Sans">?</text></svg>
<svg style="left:859px;top:302px" width="8" height="8"><path d="M0.5 7.5 L3.2 4.8" stroke="#3d8fe0" stroke-width="1"/><path d="M2.3 3.6 L4.4 5.7 L7.6 2.4 L5.6 0.4z" fill="#3d8fe0"/></svg>
<svg style="left:869.3px;top:302.5px" width="6.5" height="6.5"><path d="M0.5 0.5 L6.0 6.0 M6.0 0.5 L0.5 6.0" stroke="#e8e8e8" stroke-width="1.1"/></svg>
<div class="a" style="left:229.9px;top:320.2px;width:66.60px;height:11.80px;background:#717171;"></div>
<div class="t " style="left:163.20px;top:321.70px;width:200px;text-align:center;color:#f0f0f0">Circuit Simulation</div>
<div class="a" style="left:298.8px;top:320.2px;width:56.40px;height:11.80px;background:#717171;"></div>
<div class="t " style="left:227.00px;top:321.70px;width:200px;text-align:center;color:#f0f0f0">Bus Simulation</div>
<div class="a" style="left:357.5px;top:320.2px;width:88.40px;height:11.80px;background:#0a78d7;"></div>
<div class="t " style="left:301.70px;top:321.70px;width:200px;text-align:center;color:#fff">IO Models and Stimulus</div>
<div class="a" style="left:727.3px;top:320.2px;width:63.90px;height:12.00px;background:#505050;border:1px solid #606060;"></div>
<div class="t " style="left:659.25px;top:321.80px;width:200px;text-align:center;color:#f0f0f0">Restore Defaults</div>
<div class="a" style="left:793.5px;top:320.2px;width:80px;height:12.6px;background:transparent;border:1px solid #666"></div>
<svg style="left:796.5px;top:322px" width="10" height="10"><circle cx="3.9" cy="3.9" r="3.1" fill="none" stroke="#e0e0e0" stroke-width="1.1"/><path d="M6.1 6.1 L9 9" stroke="#e0e0e0" stroke-width="1.4"/></svg>
<div class="t dis" style="left:808.5px;top:322.00px;">Search</div>
<div class="t w" style="left:232.7px;top:337.00px;">Data Rate:</div>
<div class="a" style="left:271.4px;top:335.5px;width:56.60px;height:11.70px;background:#4e4e4e;border:1px solid #606060"></div>
<div class="t " style="left:273.7px;top:336.95px;color:#e8e8e8;font-size:9px;letter-spacing:-0.7px">1.0665</div>
<div class="t w" style="left:330.3px;top:337.00px;">Gbps</div>
<div class="t w" style="left:362px;top:337.00px;">Clock Period: T =</div>
<div class="a" style="left:425px;top:335.5px;width:56.80px;height:11.70px;background:#4e4e4e;border:1px solid #606060"></div>
<div class="t " style="left:427.3px;top:336.95px;color:#e8e8e8;font-size:9px;letter-spacing:-0.7px">1.8752</div>
<div class="t w" style="left:484px;top:337.00px;">ns</div>
<div class="t w" style="left:504px;top:337.00px;">Signal Clocking:</div>
<div class="a" style="left:562.2px;top:336px;width:24.6px;height:11px;border:1px solid #6a6a6a"></div>
<div class="t w" style="left:564.5px;top:337.00px;">1T</div>
<svg style="left:579px;top:339.5px" width="6" height="4"><path d="M0 0 H5.4 L2.7 3.6z" fill="#f0f0f0"/></svg>
<div class="t w" style="left:599.8px;top:337.00px;">Bit Period: UI =</div>
<div class="a" style="left:657.2px;top:335.5px;width:55.40px;height:11.70px;background:#4e4e4e;border:1px solid #606060"></div>
<div class="t " style="left:659.5px;top:336.95px;color:#e8e8e8;font-size:9px;letter-spacing:-0.7px">1.8752</div>
<div class="t w" style="left:715px;top:337.00px;">ns</div>
<div class="t w" style="left:735.5px;top:337.00px;">Minimum # of Bits</div>
<div class="a" style="left:802.5px;top:335.5px;width:57.00px;height:11.70px;background:#4e4e4e;border:1px solid #606060"></div>
<div class="t " style="left:804.8px;top:336.95px;color:#e8e8e8;font-size:9px;letter-spacing:-0.7px">32</div>
<div class="a" style="left:232px;top:354px;width:639px;height:135.5px;border:1px solid #666"></div>
<div class="a" style="left:236px;top:352px;width:62px;height:4px;background:#444;"></div>
<div class="t w" style="left:243.8px;top:351.80px;">Model Selection</div>
<div class="a" style="left:239px;top:360.7px;width:39.50px;height:12.10px;background:#0a78d7;"></div>
<div class="t " style="left:158.75px;top:362.35px;width:200px;text-align:center;color:#fff">Controller</div>
<div class="a" style="left:280.5px;top:360.7px;width:33.30px;height:12.10px;background:#717171;"></div>
<div class="t " style="left:197.15px;top:362.35px;width:200px;text-align:center;color:#f0f0f0">Memory</div>
<div class="a" style="left:521.3px;top:363px;width:6px;height:6px;background:#fff"></div>
<div class="t dis" style="left:530.5px;top:361.80px;">WLO/CktMeasDelay</div>
<div class="a" style="left:606.6px;top:363px;width:6px;height:6px;background:#fff"></div>
<svg style="left:606.6px;top:363px" width="6" height="6"><path d="M1 3 L2.5 4.5 L5 1.5" fill="none" stroke="#333" stroke-width="1"/></svg>
<div class="t w" style="left:616.2px;top:361.80px;">Memory Block Shared IO models</div>
<div class="t w" style="left:737.5px;top:360.80px;">IO Model Filter:</div>
<div class="a" style="left:797px;top:360.6px;width:67px;height:11.4px;border:1px solid #606060"></div>
<div class="a" style="left:239px;top:373px;width:625px;height:115.5px;border:1px solid #6a6a6a"></div>
<div class="a" style="left:239px;top:386px;width:619px;height:1px;background:#646464;"></div>
<div class="a" style="left:239px;top:399px;width:619px;height:1px;background:#646464;"></div>
<div class="a" style="left:319.2px;top:373px;width:1px;height:26.5px;background:#646464;"></div>
<div class="a" style="left:399.2px;top:373px;width:1px;height:26.5px;background:#646464;"></div>
<div class="a" style="left:479.3px;top:373px;width:1px;height:26.5px;background:#646464;"></div>
<div class="a" style="left:559.3px;top:373px;width:1px;height:26.5px;background:#646464;"></div>
<div class="a" style="left:623.2px;top:373px;width:1px;height:26.5px;background:#646464;"></div>
<div class="t b" style="left:179.50px;top:375.70px;width:200px;text-align:center;">Signal Name</div>
<div class="t b" style="left:259.70px;top:375.70px;width:200px;text-align:center;">Stimulus Pattern</div>
<div class="t b" style="left:339.70px;top:375.70px;width:200px;text-align:center;">Stimulus Offset (ns)</div>
<div class="t b" style="left:419.80px;top:375.70px;width:200px;text-align:center;">Transmit IO Model</div>
<div class="t b" style="left:491.70px;top:375.70px;width:200px;text-align:center;">Status</div>
<div class="a" style="left:245.5px;top:391.5px;width:1px;height:1px;background:#999;"></div>
<div class="a" style="left:325.5px;top:391.5px;width:1px;height:1px;background:#999;"></div>
<div class="a" style="left:405.5px;top:391.5px;width:1px;height:1px;background:#999;"></div>
<div class="a" style="left:485.5px;top:391.5px;width:1px;height:1px;background:#999;"></div>
<div class="a" style="left:565.5px;top:391.5px;width:1px;height:1px;background:#999;"></div>
<div class="a" style="left:268.2px;top:402.6px;width:6px;height:6px;background:#fff"></div>
<svg style="left:268.2px;top:402.6px" width="6" height="6"><path d="M1 3 L2.5 4.5 L5 1.5" fill="none" stroke="#333" stroke-width="1"/></svg>
<div class="t " style="left:278.1px;top:400.90px;color:#ececec;font-size:8.5px;letter-spacing:-0.7px">CLK0N</div>
<div class="t " style="left:481.6px;top:401.20px;color:#ececec;font-size:6.5px;letter-spacing:-0.45px">DDR3_DQS34_NO_...</div>
<div class="t w" style="left:561.5px;top:401.00px;font-size:8.5px;letter-spacing:-0.32px">Timing Ref</div>
<div class="a" style="left:268.2px;top:414.90000000000003px;width:6px;height:6px;background:#fff"></div>
<div class="t " style="left:278.1px;top:413.20px;color:#a8a8a8;font-size:8.5px;letter-spacing:-0.7px">CLK1P</div>
<div class="t " style="left:481.6px;top:413.50px;color:#a8a8a8;font-size:6.5px;letter-spacing:-0.45px">DDR3_DQS34_NO_...</div>
<div class="t w" style="left:561.5px;top:413.30px;font-size:8.5px;letter-spacing:-0.32px">Not Connected</div>
<div class="a" style="left:268.2px;top:427.20000000000005px;width:6px;height:6px;background:#fff"></div>
<div class="t " style="left:278.1px;top:425.50px;color:#a8a8a8;font-size:8.5px;letter-spacing:-0.7px">CLK1N</div>
<div class="t " style="left:481.6px;top:425.80px;color:#a8a8a8;font-size:6.5px;letter-spacing:-0.45px">DDR3_DQS34_NO_...</div>
<div class="t w" style="left:561.5px;top:425.60px;font-size:8.5px;letter-spacing:-0.32px">Not Connected</div>
<div class="a" style="left:268.2px;top:439.5px;width:6px;height:6px;background:#fff"></div>
<div class="t " style="left:278.1px;top:437.80px;color:#a8a8a8;font-size:8.5px;letter-spacing:-0.7px">CLK2P</div>
<div class="t " style="left:481.6px;top:438.10px;color:#a8a8a8;font-size:6.5px;letter-spacing:-0.45px">DDR3_DQS34_NO_...</div>
<div class="t w" style="left:561.5px;top:437.90px;font-size:8.5px;letter-spacing:-0.32px">Not Connected</div>
<div class="a" style="left:268.2px;top:451.8px;width:6px;height:6px;background:#fff"></div>
<div class="t " style="left:278.1px;top:450.10px;color:#a8a8a8;font-size:8.5px;letter-spacing:-0.7px">CLK2N</div>
<div class="t " style="left:481.6px;top:450.40px;color:#a8a8a8;font-size:6.5px;letter-spacing:-0.45px">DDR3_DQS34_NO_...</div>
<div class="t w" style="left:561.5px;top:450.20px;font-size:8.5px;letter-spacing:-0.32px">Not Connected</div>
<div class="a" style="left:268.2px;top:464.1px;width:6px;height:6px;background:#fff"></div>
<div class="t " style="left:278.1px;top:462.40px;color:#a8a8a8;font-size:8.5px;letter-spacing:-0.7px">CLK3P</div>
<div class="t " style="left:481.6px;top:462.70px;color:#a8a8a8;font-size:6.5px;letter-spacing:-0.45px">DDR3_DQS34_NO_...</div>
<div class="t w" style="left:561.5px;top:462.50px;font-size:8.5px;letter-spacing:-0.32px">Not Connected</div>
<div class="a" style="left:268.2px;top:476.40000000000003px;width:6px;height:6px;background:#fff"></div>
<div class="t " style="left:278.1px;top:474.70px;color:#a8a8a8;font-size:8.5px;letter-spacing:-0.7px">CLK3N</div>
<div class="t " style="left:481.6px;top:475.00px;color:#a8a8a8;font-size:6.5px;letter-spacing:-0.45px">DDR3_DQS34_NO_...</div>
<div class="t w" style="left:561.5px;top:474.80px;font-size:8.5px;letter-spacing:-0.32px">Not Connected</div>
<div class="t w" style="left:320.7px;top:401.00px;font-size:8.5px;letter-spacing:-0.4px">01..</div>
<div class="t w" style="left:401px;top:401.00px;font-size:8.5px;letter-spacing:-0.4px">0.5T</div>
<div class="a" style="left:857.8px;top:438.9px;width:4.5px;height:44px;background:#8e8e8e;"></div>
<div class="t w" style="left:884.6px;top:20.60px;">Edit Properties</div>
<svg style="left:993.2px;top:21.2px" width="9" height="9"><rect x="0.5" y="0.5" width="8" height="8" fill="none" stroke="#ddd" stroke-width="1"/><rect x="2" y="0" width="5" height="1" fill="#d04040"/><text x="4.5" y="7.2" font-size="7" text-anchor="middle" fill="#eee" font-family="Liberation Sans">?</text></svg>
<svg style="left:1003.5px;top:22px" width="8" height="8"><path d="M0.5 7.5 L3.2 4.8" stroke="#3d8fe0" stroke-width="1"/><path d="M2.3 3.6 L4.4 5.7 L7.6 2.4 L5.6 0.4z" fill="#3d8fe0"/></svg>
<svg style="left:1014.5px;top:22.6px" width="6.5" height="6.5"><path d="M0.5 0.5 L6.0 6.0 M6.0 0.5 L0.5 6.0" stroke="#e8e8e8" stroke-width="1.1"/></svg>
<div class="a" style="left:883.4px;top:34.4px;width:140px;height:12.2px;background:#454545;border:1px solid #5e5e5e"></div>
<svg style="left:886px;top:36px" width="11" height="10"><circle cx="4.2" cy="4.2" r="3.3" fill="none" stroke="#e4e4e4" stroke-width="1.1"/><path d="M6.6 6.6 L9.6 9.4" stroke="#e4e4e4" stroke-width="1.5"/></svg>
<div class="t dis" style="left:898.8px;top:35.60px;font-size:7.5px">Search</div>
<div class="a" style="left:883.4px;top:49px;width:23.6px;height:12.2px;background:#0a78d7;"></div>
<svg style="left:889px;top:50px" width="12" height="10"><path d="M2.5 1 V9 M6 1 V9 M9.5 1 V9" stroke="#e8f0ff" stroke-width="1"/><rect x="1.3" y="5" width="2.4" height="1.4" fill="#fff"/><rect x="4.8" y="2.5" width="2.4" height="1.4" fill="#fff"/><rect x="8.3" y="6" width="2.4" height="1.4" fill="#fff"/></svg>
<div class="a" style="left:909px;top:49px;width:23.7px;height:12.2px;background:#6e6e6e;"></div>
<svg style="left:914px;top:49.5px" width="14" height="12"><g transform="rotate(35 7 6)"><path d="M2.2 6 L5 2.8 H11 V9.2 H5 z" fill="none" stroke="#e03a3a" stroke-width="1.4" stroke-linejoin="round"/><circle cx="5.2" cy="6" r="1" fill="#e03a3a"/></g></svg>
<div class="t w" style="left:888.3px;top:69.40px;">Display Unconnected Power Pins</div>
<div class="t w" style="left:888.3px;top:83.50px;">Display Unconnected Ground Pins</div>
<div class="t w" style="left:888.3px;top:97.70px;">Display Pin Info</div>
<div class="a" style="left:1018px;top:68.9px;width:12px;height:9.6px;background:#f4f4f4;border-radius:5px"></div>
<div class="a" style="left:1018px;top:82.9px;width:12px;height:9.6px;background:#f4f4f4;border-radius:5px"></div>
<div class="a" style="left:933px;top:96.6px;width:26.80px;height:10.20px;background:#565656;"></div>
<div class="t " style="left:846.40px;top:97.30px;width:200px;text-align:center;color:#f0f0f0">Net</div>
<div class="a" style="left:960.2px;top:96.6px;width:26.80px;height:10.20px;background:#0a78d7;"></div>
<div class="t " style="left:873.60px;top:97.30px;width:200px;text-align:center;color:#fff">Pin</div>
<div class="a" style="left:987.8px;top:96.6px;width:26.10px;height:10.20px;background:#565656;"></div>
<div class="t " style="left:900.85px;top:97.30px;width:200px;text-align:center;color:#f0f0f0">Cktnode</div>
<div class="a" style="left:1015.3px;top:96.6px;width:24.70px;height:10.20px;background:#565656;"></div>
<div class="t " style="left:927.65px;top:97.30px;width:200px;text-align:center;color:#f0f0f0"></div>
<div class="t w" style="left:1019.5px;top:97.30px;">N</div>
<div class="a" style="left:889px;top:477.3px;width:136px;height:11.5px;background:#535353;border:1px solid #666"></div>
<div class="a" style="left:889px;top:490px;width:135px;height:2px;background:#4c4c4c;border-top:1px solid #606060"></div>
<div class="t w" style="left:889px;top:478px;width:134px;text-align:right;padding-right:2px">Short Unconnected Ground Pins to GND</div>
</body></html>
